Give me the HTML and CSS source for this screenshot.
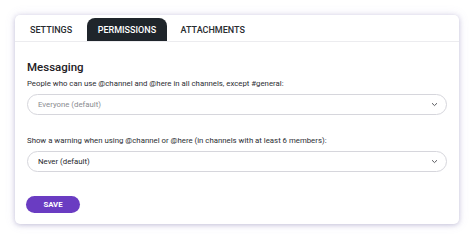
FILE: index.html
```html
<!DOCTYPE html>
<html>
<head>
<meta charset="utf-8">
<link rel="stylesheet" href="styles.css">
</head>
<body>
<div class="card">
  <div class="tabs">
    <div class="tab">SETTINGS</div>
    <div class="tab active">PERMISSIONS</div>
    <div class="tab">ATTACHMENTS</div>
  </div>
  <div class="content">
    <h2 class="heading">Messaging</h2>
    <div class="field">
      <label class="label">People who can use @channel and @here in all channels, except #general:</label>
      <div class="select">
        <span class="placeholder">Everyone (default)</span>
        <svg class="chev" width="7" height="5" viewBox="0 0 7 5"><path d="M1 1.2 L3.5 3.6 L6 1.2" fill="none" stroke="#5a5b60" stroke-width="1"/></svg>
      </div>
    </div>
    <div class="field second">
      <label class="label">Show a warning when using @channel or @here (in channels with at least 6 members):</label>
      <div class="select">
        <span class="value">Never (default)</span>
        <svg class="chev" width="7" height="5" viewBox="0 0 7 5"><path d="M1 1.2 L3.5 3.6 L6 1.2" fill="none" stroke="#5a5b60" stroke-width="1"/></svg>
      </div>
    </div>
    <div class="actions">
      <button class="save">SAVE</button>
    </div>
  </div>
</div>
</body>
</html>
```

FILE: styles.css
```css
html, body {
  margin: 0;
  padding: 0;
  background: #ffffff;
}
body {
  padding: 15px;
  font-family: Roboto, "Liberation Sans", sans-serif;
  color: #222428;
}
.card {
  width: 444px;
  height: 209px;
  box-sizing: border-box;
  background: #fff;
  border-radius: 5px;
  box-shadow: 0 1px 5px rgba(70, 60, 130, 0.28), 0 0 12px rgba(120, 110, 200, 0.12);
  display: flex;
  flex-direction: column;
}
.tabs {
  display: flex;
  align-items: flex-end;
  height: 26px;
  padding-left: 4px;
  gap: 3px;
  border-bottom: 1px solid #ececef;
}
.tab {
  height: 23px;
  padding: 0 11px;
  display: flex;
  align-items: center;
  font-size: 9px;
  font-weight: 500;
  color: #2a2c30;
  border-radius: 8px 8px 0 0;
}
.tab.active {
  background: #1f252b;
  color: #ffffff;
  padding: 0 10.5px;
  margin-left: 1px;
}
.content {
  padding: 0 12px 0 12px;
  display: flex;
  flex-direction: column;
}
.heading {
  margin: 18px 0 0 0;
  font-size: 11.5px;
  line-height: 14px;
  font-weight: 500;
  color: #1e2024;
}
.field {
  display: flex;
  flex-direction: column;
}
.label {
  margin-top: 4px;
  font-size: 7.8px;
  line-height: 11px;
  color: #2c2e33;
}
.select {
  margin-top: 5px;
  height: 21px;
  box-sizing: border-box;
  border: 1px solid #d6d6dc;
  border-radius: 11px;
  display: flex;
  align-items: center;
  justify-content: space-between;
  padding: 0 8px 0 10px;
  font-size: 7.8px;
}
.placeholder {
  color: #8a8b90;
}
.value {
  color: #26282c;
}
.second {
  margin-top: 20px;
}
.second .label {
  margin-top: 0;
}
.actions {
  margin-top: 24px;
  display: flex;
}
.save {
  width: 54px;
  height: 17px;
  border: none;
  border-radius: 9px;
  background: #6a3cc2;
  color: #fff;
  font-family: Roboto, "Liberation Sans", sans-serif;
  font-size: 7.8px;
  font-weight: 700;
  padding: 0;
  margin-left: -1px;
}
```
